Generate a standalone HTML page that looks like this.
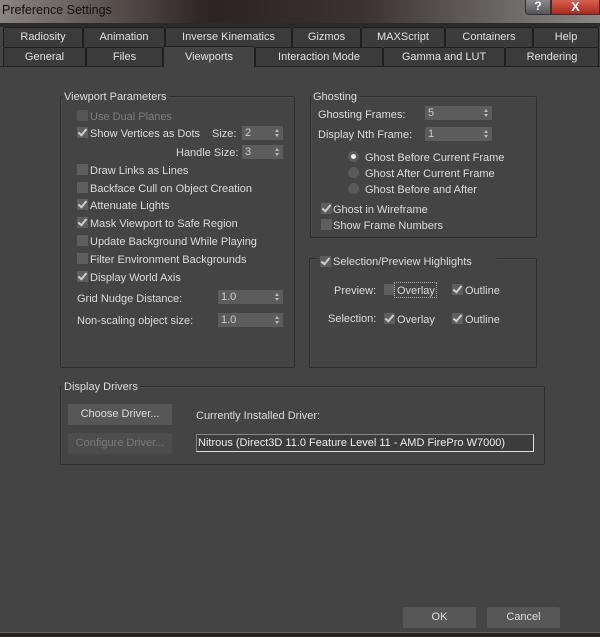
<!DOCTYPE html>
<html><head><style>
*{margin:0;padding:0;box-sizing:border-box}
body{width:600px;height:637px;background:#444;position:relative;overflow:hidden;font-family:"Liberation Sans",sans-serif;font-size:11px;color:#dcdcdc}
.a{position:absolute;white-space:nowrap}
.t{position:absolute;line-height:14px;margin-top:1px;white-space:nowrap}
#title{left:0;top:0;width:600px;height:23px;background:linear-gradient(90deg,#8a8480 0%,#6a625e 12%,#2c2422 35%,#3a3230 60%,#6e6a68 85%,#8a8684 100%)}
.tab{position:absolute;height:20px;background:#3b3b3b;border:1px solid #1e1e1e;border-bottom:none;text-align:center;line-height:19px;color:#e0e0e0;border-radius:2px 2px 0 0}
.grp{position:absolute;border:1px solid #2e2e2e;box-shadow:inset 1px 1px 0 #4c4c4c;border-radius:2px}
.lbl{position:absolute;background:#444;padding:0 2px;line-height:14px;margin-top:1px}
.cb{position:absolute;width:11px;height:11px;background:#5e5e5e}
.cb.on::after{content:"";position:absolute;left:3px;top:0px;width:3px;height:7px;border:solid #cfcfcf;border-width:0 2px 2px 0;transform:rotate(40deg)}
.rd{position:absolute;width:11px;height:11px;border-radius:50%;background:#5a5a5a}
.rd.on::after{content:"";position:absolute;left:3px;top:3px;width:5px;height:5px;border-radius:50%;background:#eee}
.sp{position:absolute;height:14px;background:#5c5c5c;color:#ccc;line-height:14px;padding-left:3px}
.sp::after{content:"";position:absolute;right:4px;top:3px;border:solid transparent;border-width:0 2.5px 3px;border-bottom-color:#bbb}
.sp::before{content:"";position:absolute;right:4px;top:8px;border:solid transparent;border-width:3px 2.5px 0;border-top-color:#bbb}
.btn{position:absolute;background:#575757;border-radius:2px;text-align:center;line-height:21px;height:21px;color:#ddd}
</style></head><body>
<div class="a" id="title"></div>
<div class="a" style="left:2px;top:3px;font-size:12.5px;color:#111">Preference Settings</div>
<div class="a" style="left:525px;top:0;width:26px;height:15px;background:linear-gradient(#8a8a8e,#55555a);border:1px solid #333;border-top:none;border-radius:0 0 0 4px;color:#fff;font-weight:bold;text-align:center;font-size:12px;line-height:13px">?</div>
<div class="a" style="left:551px;top:0;width:49px;height:15px;background:linear-gradient(#d86050,#a82a1a);border:1px solid #333;border-top:none;color:#fff;font-weight:bold;text-align:center;font-size:13px;line-height:13px">X</div>
<div class="a" style="left:0;top:23px;width:600px;height:4px;background:#2a2a2a"></div>
<div class="a" style="left:0;top:27px;width:600px;height:40px;background:#444"></div>
<div class="tab" style="left:3px;top:27px;width:80px">Radiosity</div>
<div class="tab" style="left:83px;top:27px;width:82px">Animation</div>
<div class="tab" style="left:165px;top:27px;width:127px">Inverse Kinematics</div>
<div class="tab" style="left:292px;top:27px;width:69px">Gizmos</div>
<div class="tab" style="left:361px;top:27px;width:84px">MAXScript</div>
<div class="tab" style="left:445px;top:27px;width:88px">Containers</div>
<div class="tab" style="left:533px;top:27px;width:66px">Help</div>
<div class="tab" style="left:3px;top:47px;width:83px">General</div>
<div class="tab" style="left:86px;top:47px;width:77px">Files</div>
<div class="tab" style="left:163px;top:46px;width:92px;height:22px;background:#444;z-index:2;border-color:#222;line-height:20px">Viewports</div>
<div class="tab" style="left:255px;top:47px;width:128px">Interaction Mode</div>
<div class="tab" style="left:383px;top:47px;width:122px">Gamma and LUT</div>
<div class="tab" style="left:505px;top:47px;width:94px">Rendering</div>
<div class="a" style="left:0;top:66px;width:600px;height:1px;background:#222"></div>

<div class="grp" style="left:60px;top:96px;width:235px;height:272px"></div>
<div class="lbl" style="left:62px;top:89px">Viewport Parameters</div>
<div class="cb" style="left:77px;top:110px;background:#555"></div><div class="t" style="left:90px;top:109px;color:#7c7c7c">Use Dual Planes</div>
<div class="cb on" style="left:77px;top:127px"></div><div class="t" style="left:90px;top:126px">Show Vertices as Dots</div>
<div class="t" style="left:212px;top:126px">Size:</div><div class="sp" style="left:242px;top:126px;width:41px">2</div>
<div class="t" style="left:176px;top:145px">Handle Size:</div><div class="sp" style="left:242px;top:145px;width:41px">3</div>
<div class="cb" style="left:77px;top:164px"></div><div class="t" style="left:90px;top:163px">Draw Links as Lines</div>
<div class="cb" style="left:77px;top:182px"></div><div class="t" style="left:90px;top:181px">Backface Cull on Object Creation</div>
<div class="cb on" style="left:77px;top:199px"></div><div class="t" style="left:90px;top:198px">Attenuate Lights</div>
<div class="cb on" style="left:77px;top:217px"></div><div class="t" style="left:90px;top:216px">Mask Viewport to Safe Region</div>
<div class="cb" style="left:77px;top:235px"></div><div class="t" style="left:90px;top:234px">Update Background While Playing</div>
<div class="cb" style="left:77px;top:253px"></div><div class="t" style="left:90px;top:252px">Filter Environment Backgrounds</div>
<div class="cb on" style="left:77px;top:271px"></div><div class="t" style="left:90px;top:270px">Display World Axis</div>
<div class="t" style="left:77px;top:291px">Grid Nudge Distance:</div><div class="sp" style="left:218px;top:290px;width:65px">1.0</div>
<div class="t" style="left:77px;top:313px">Non-scaling object size:</div><div class="sp" style="left:218px;top:313px;width:65px">1.0</div>

<div class="grp" style="left:310px;top:96px;width:227px;height:142px"></div>
<div class="lbl" style="left:311px;top:89px">Ghosting</div>
<div class="t" style="left:318px;top:107px">Ghosting Frames:</div><div class="sp" style="left:425px;top:106px;width:67px">5</div>
<div class="t" style="left:318px;top:127px">Display Nth Frame:</div><div class="sp" style="left:425px;top:127px;width:67px">1</div>
<div class="rd on" style="left:348px;top:151px"></div><div class="t" style="left:365px;top:150px">Ghost Before Current Frame</div>
<div class="rd" style="left:348px;top:167px"></div><div class="t" style="left:365px;top:166px">Ghost After Current Frame</div>
<div class="rd" style="left:348px;top:183px"></div><div class="t" style="left:365px;top:182px">Ghost Before and After</div>
<div class="cb on" style="left:321px;top:203px"></div><div class="t" style="left:333px;top:202px">Ghost in Wireframe</div>
<div class="cb" style="left:321px;top:219px"></div><div class="t" style="left:333px;top:218px">Show Frame Numbers</div>

<div class="grp" style="left:309px;top:258px;width:228px;height:110px"></div>
<div class="lbl" style="left:317px;top:253px;width:180px;height:14px"></div>
<div class="cb on" style="left:320px;top:256px"></div><div class="t" style="left:333px;top:254px">Selection/Preview Highlights</div>
<div class="t" style="left:334px;top:283px">Preview:</div>
<div class="cb" style="left:384px;top:284px"></div>
<div class="a" style="left:394px;top:282px;width:43px;height:16px;border:1px dotted #aaa"></div>
<div class="t" style="left:397px;top:283px">Overlay</div>
<div class="cb on" style="left:452px;top:284px"></div><div class="t" style="left:465px;top:283px">Outline</div>
<div class="t" style="left:328px;top:311px">Selection:</div>
<div class="cb on" style="left:384px;top:313px"></div><div class="t" style="left:397px;top:312px">Overlay</div>
<div class="cb on" style="left:452px;top:313px"></div><div class="t" style="left:465px;top:312px">Outline</div>

<div class="grp" style="left:60px;top:386px;width:485px;height:79px"></div>
<div class="lbl" style="left:62px;top:379px">Display Drivers</div>
<div class="btn" style="left:68px;top:404px;width:104px">Choose Driver...</div>
<div class="btn" style="left:68px;top:433px;width:104px;background:#4d4d4d;color:#7a7a7a">Configure Driver...</div>
<div class="t" style="left:196px;top:408px">Currently Installed Driver:</div>
<div class="a" style="left:196px;top:434px;width:338px;height:18px;border:1px solid #ddd;border-left-color:#888;border-top-color:#888;background:#3c3c3c;color:#eee;line-height:17px;padding-left:1px">Nitrous (Direct3D 11.0 Feature Level 11 - AMD FirePro W7000)</div>

<div class="btn" style="left:403px;top:607px;width:73px">OK</div>
<div class="btn" style="left:487px;top:607px;width:73px">Cancel</div>
<div class="a" style="left:0;top:632px;width:600px;height:5px;background:#2a2220;border-top:1px solid #666"></div>
</body></html>
